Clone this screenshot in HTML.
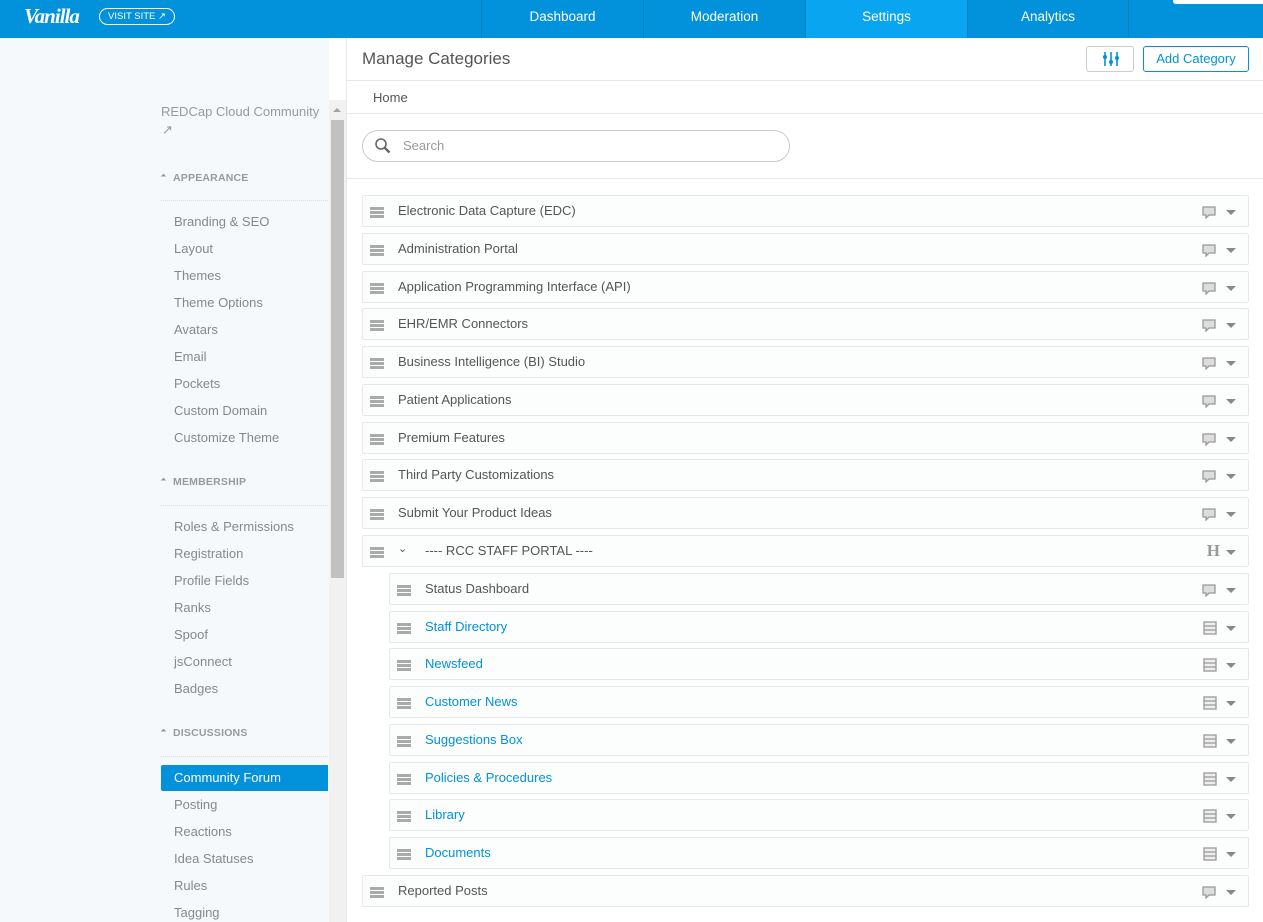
<!DOCTYPE html>
<html><head><meta charset="utf-8"><style>
*{box-sizing:border-box;margin:0;padding:0}
body{width:1263px;height:922px;overflow:hidden;font-family:"Liberation Sans",sans-serif;background:#fff;position:relative;color:#555}
.a{position:absolute}
.top{left:0;top:0;width:1263px;height:38px;background:#0291db}
.tab{top:0;height:38px;color:#fff;font-size:13.5px;text-align:center;line-height:33px;border-left:1px solid #0480c2}
.side{left:0;top:38px;width:329px;height:884px;background:#f6f9fc}
.si{left:174px;font-size:13px;color:#888;line-height:16px}
.sh{left:161px;font-size:10.5px;font-weight:bold;color:#999;letter-spacing:.2px}
.sh:before{content:"";display:inline-block;width:0;height:0;border-top:5px solid #999;border-left:5px solid transparent;margin-right:7px;vertical-align:2px;transform:rotate(-45deg) scale(.8)}
.dl{left:161px;width:167px;border-top:1px dotted #dde2e8}
.row{height:32px;border:1px solid #e6e9ec;border-radius:2px;background:#fcfdfd}
.row .t{position:absolute;left:35px;top:7px;font-size:13px;color:#555}
.row .t.b{color:#0291db}
.ham{position:absolute;left:7px;top:11px;width:14px;height:11px;background:linear-gradient(#aaa 0 3px,transparent 3px 4px,#aaa 4px 7px,transparent 7px 8px,#aaa 8px 11px)}
.car{position:absolute;right:12px;top:14px;border-left:5px solid transparent;border-right:5px solid transparent;border-top:5px solid #888}
.ic{position:absolute;right:31px;top:10px}
</style></head><body>
<div class="a top"></div>
<div class="a" style="left:24px;top:4px;color:#fff;font:italic bold 21px 'Liberation Serif',serif;letter-spacing:-1px">Vanilla</div>
<div class="a" style="left:99px;top:8px;width:76px;height:17px;border:1px solid #fff;border-radius:9px;color:#fff;font-size:9.5px;text-align:center;line-height:15px">VISIT SITE ↗</div>
<div class="a tab" style="left:481px;width:162px">Dashboard</div>
<div class="a tab" style="left:643px;width:162px">Moderation</div>
<div class="a tab" style="left:805px;width:162px;background:#0aa5f0">Settings</div>
<div class="a tab" style="left:967px;width:162px;border-right:1px solid #0480c2">Analytics</div>
<div class="a" style="left:1173px;top:0;width:90px;height:4px;background:#fff;border-radius:0 0 0 3px"></div>

<div class="a side"></div>
<div class="a" style="left:329px;top:100px;width:17px;height:822px;background:#f1f1f1"></div>
<div class="a" style="left:333px;top:108px;border-left:4px solid transparent;border-right:4px solid transparent;border-bottom:4px solid #a3a3a3"></div>
<div class="a" style="left:331px;top:120px;width:13px;height:458px;background:#c1c1c1"></div>
<div class="a" style="left:346px;top:38px;width:1px;height:884px;background:#e6e9ec"></div>

<div class="a si" style="left:161px;top:104px;color:#999">REDCap Cloud Community</div>
<div class="a si" style="left:162px;top:122px;color:#999">↗</div>
<div class="a sh" style="top:172px">APPEARANCE</div><div class="a dl" style="top:200px"></div>
<div class="a si" style="top:214px">Branding &amp; SEO</div>
<div class="a si" style="top:241px">Layout</div>
<div class="a si" style="top:268px">Themes</div>
<div class="a si" style="top:295px">Theme Options</div>
<div class="a si" style="top:322px">Avatars</div>
<div class="a si" style="top:349px">Email</div>
<div class="a si" style="top:376px">Pockets</div>
<div class="a si" style="top:403px">Custom Domain</div>
<div class="a si" style="top:430px">Customize Theme</div>
<div class="a sh" style="top:476px">MEMBERSHIP</div><div class="a dl" style="top:505px"></div>
<div class="a si" style="top:519px">Roles &amp; Permissions</div>
<div class="a si" style="top:546px">Registration</div>
<div class="a si" style="top:573px">Profile Fields</div>
<div class="a si" style="top:600px">Ranks</div>
<div class="a si" style="top:627px">Spoof</div>
<div class="a si" style="top:654px">jsConnect</div>
<div class="a si" style="top:681px">Badges</div>
<div class="a sh" style="top:727px">DISCUSSIONS</div><div class="a dl" style="top:756px"></div>
<div class="a" style="left:161px;top:765px;width:167px;height:26px;background:#0291db;border-radius:2px 0 0 2px"></div>
<div class="a si" style="top:770px;color:#fff">Community Forum</div>
<div class="a si" style="top:797px">Posting</div>
<div class="a si" style="top:824px">Reactions</div>
<div class="a si" style="top:851px">Idea Statuses</div>
<div class="a si" style="top:878px">Rules</div>
<div class="a si" style="top:905px">Tagging</div>

<div class="a" style="left:362px;top:49px;font-size:17px;color:#555">Manage Categories</div>
<div class="a" style="left:1086px;top:46px;width:48px;height:26px;border:1px solid #ccc;border-radius:3px">
<svg width="20" height="20" viewBox="0 0 20 20" style="position:absolute;left:14px;top:2px" stroke="#0291db" stroke-width="1.6" fill="#0291db"><path d="M4 3v14M10 3v14M16 3v14" /><circle cx="4" cy="8" r="2" stroke="none"/><circle cx="10" cy="13" r="2" stroke="none"/><circle cx="16" cy="9" r="2" stroke="none"/></svg></div>
<div class="a" style="left:1143px;top:46px;width:106px;height:26px;border:1px solid #0291db;border-radius:3px;color:#0291db;font-size:13px;text-align:center;line-height:24px">Add Category</div>
<div class="a" style="left:347px;top:80px;width:916px;height:1px;background:#e6e9ec"></div>
<div class="a" style="left:373px;top:90px;font-size:13px;color:#555">Home</div>
<div class="a" style="left:347px;top:113px;width:916px;height:1px;background:#e6e9ec"></div>
<div class="a" style="left:362px;top:130px;width:428px;height:32px;border:1px solid #ccc;border-radius:16px">
<svg width="18" height="18" viewBox="0 0 18 18" style="position:absolute;left:11px;top:6px" fill="none" stroke="#666" stroke-width="1.6"><circle cx="7" cy="7" r="5"/><path d="M10.5 10.5l5 5" stroke-width="2.4"/></svg>
<span style="position:absolute;left:40px;top:7px;font-size:13px;color:#999">Search</span></div>
<div class="a" style="left:347px;top:178px;width:916px;height:1px;background:#e6e9ec"></div>

<div id="rows"></div>
<script>
var R=[["Electronic Data Capture (EDC)",0,0,"c"],["Administration Portal",0,0,"c"],["Application Programming Interface (API)",0,0,"c"],["EHR/EMR Connectors",0,0,"c"],["Business Intelligence (BI) Studio",0,0,"c"],["Patient Applications",0,0,"c"],["Premium Features",0,0,"c"],["Third Party Customizations",0,0,"c"],["Submit Your Product Ideas",0,0,"c"],["---- RCC STAFF PORTAL ----",0,0,"h"],["Status Dashboard",1,0,"c"],["Staff Directory",1,1,"l"],["Newsfeed",1,1,"l"],["Customer News",1,1,"l"],["Suggestions Box",1,1,"l"],["Policies & Procedures",1,1,"l"],["Library",1,1,"l"],["Documents",1,1,"l"],["Reported Posts",0,0,"c"]];
var h="";
R.forEach(function(r,i){var y=Math.round(195+i*37.78);var x=r[1]?389:362;
var ic=r[3]=="c"?'<svg class="ic" width="15" height="13" viewBox="0 0 15 13"><path d="M1 1h12v8H7l-3 3v-3H1z" fill="#ddd" stroke="#999" stroke-width="1.3"/></svg>':r[3]=="h"?'<span style="position:absolute;right:28px;top:5px;font:bold 17px \'Liberation Serif\',serif;color:#999">H</span>':'<svg class="ic" width="14" height="14" viewBox="0 0 14 14" style="top:9px"><rect x="1" y="1" width="12" height="12" fill="#eee" stroke="#999" stroke-width="1.3"/><path d="M1 5h12M1 9h12" stroke="#999" stroke-width="1.3"/></svg>';
var t=r[0].replace("&","&amp;");
var chev=r[3]=="h"?'<span style="position:absolute;left:35px;top:6px;font-size:11px;color:#555">&#8964;</span>':'';
h+='<div class="a row" style="left:'+x+'px;top:'+y+'px;width:'+(1249-x)+'px"><div class="ham"></div>'+chev+'<div class="t'+(r[2]?' b':'')+'" style="'+(r[3]=="h"?'left:62px':'')+'">'+t+'</div>'+ic+'<div class="car"></div></div>';});
document.getElementById("rows").innerHTML=h;
</script>
</body></html>
